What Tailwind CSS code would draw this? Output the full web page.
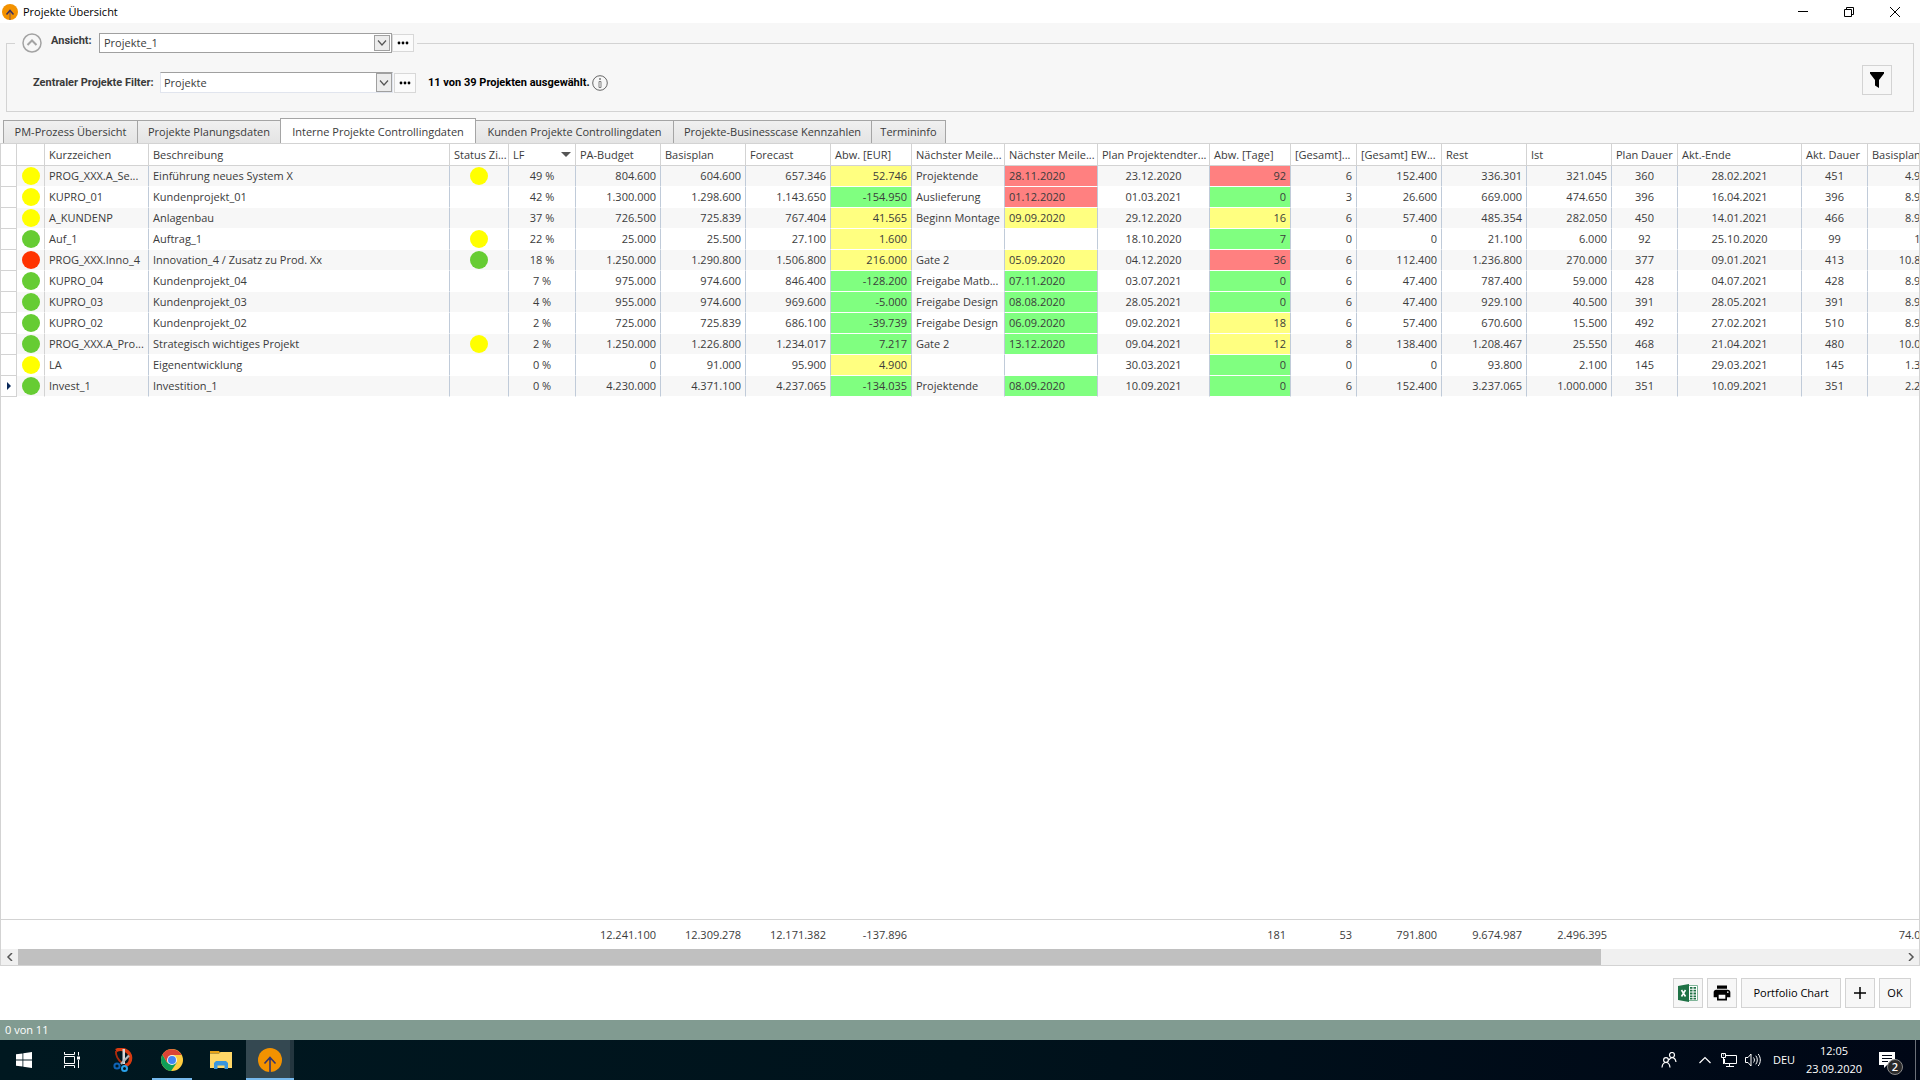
<!DOCTYPE html>
<html lang="de">

<head>
    <meta charset="UTF-8">
    <meta name="viewport" content="width=device-width, initial-scale=1.0">
    <title>Projekte Übersicht</title>
    <!-- Tailwind CSS -->
    <script src="https://cdn.jsdelivr.net/npm/@tailwindcss/browser@4"></script>
</head>

<body class="h-screen flex flex-col overflow-hidden bg-white font-['Open_Sans','Noto_Sans',sans-serif] text-[11px] leading-4 text-[#3b3b3b]">

    <!-- Title bar -->
    <header class="h-[23px] shrink-0 flex items-center bg-white text-black">
        <svg class="ml-0.5 w-4 h-4" viewBox="0 0 16 16" aria-hidden="true">
            <circle cx="8" cy="8" r="8" fill="#f39200" />
            <path d="M8 8v8" stroke="#b9762a" stroke-width="2" />
            <path d="M4.500 10.500 8 6.500l3.500 4" fill="none" stroke="#3b3260" stroke-width="1.500" />
        </svg>
        <h1 class="ml-[5px] text-[11px]">Projekte Übersicht</h1>
        <div class="ml-auto flex h-full">
            <button class="w-[46px] h-full flex items-center justify-center" aria-label="Minimieren">
                <svg class="w-2.5 h-2.5" viewBox="0 0 10 10"><path d="M0 4.500h10" stroke="#000" /></svg>
            </button>
            <button class="w-[46px] h-full flex items-center justify-center" aria-label="Wiederherstellen">
                <svg class="w-2.5 h-2.5" viewBox="0 0 10 10" fill="none" stroke="#000"><path d="M.5 2.500h7v7h-7zM2.500 2.500v-2h7v7h-2" /></svg>
            </button>
            <button class="w-[46px] h-full flex items-center justify-center" aria-label="Schließen">
                <svg class="w-2.5 h-2.5" viewBox="0 0 10 10"><path d="M0 0l10 10M10 0 0 10" stroke="#000" /></svg>
            </button>
            <span class="w-0.5"></span>
        </div>
    </header>

    <!-- View and filter selection -->
    <section class="shrink-0 bg-[#f7f7f7] pt-2.5">
        <fieldset class="ml-1.5 mr-1.5 h-[79px] border border-[#d3d3d3] px-2">
            <legend class="flex items-center h-5 pl-[7px] pr-[3px]">
                <button class="w-5 h-5" aria-label="Einklappen">
                    <svg class="w-5 h-5" viewBox="0 0 20 20" fill="none" stroke="#a3a3a3">
                        <circle cx="10" cy="10" r="9" stroke-width="1.500" />
                        <path d="M5.500 12 10 7.500l4.500 4.500" stroke-width="2" />
                    </svg>
                </button>
                <label for="ansicht" class="ml-[9px] w-12 pb-1 font-['Roboto','Open_Sans',sans-serif] font-bold whitespace-nowrap">Ansicht:</label>
                <span class="relative flex w-[293px] h-5">
                    <select id="ansicht" class="appearance-none w-full h-full border border-[#a0a0a0] bg-white pl-1">
                        <option>Projekte_1</option>
                    </select>
                    <span class="pointer-events-none absolute right-0.5 inset-y-0.5 w-4 flex items-center justify-center border border-[#a0a0a0] bg-[#ececec]">
                        <svg class="w-2.5 h-2.5" viewBox="0 0 10 10"><path d="M1 2.500 5 7l4-4.500" fill="none" stroke="#555" stroke-width="1.200" /></svg>
                    </span>
                </span>
                <button class="w-[22px] h-[18px] flex items-center justify-center border border-[#d8d8d8] bg-[#fbfbfb]" aria-label="Ansicht bearbeiten">
                    <svg class="w-3 h-1" viewBox="0 0 12 4" fill="#000"><circle cx="2" cy="2" r="1.400" /><circle cx="6" cy="2" r="1.400" /><circle cx="10" cy="2" r="1.400" /></svg>
                </button>
            </legend>
            <div class="flex items-center h-[59px] pl-[18px] pr-[13px]">
                <label for="filter" class="w-[127px] font-['Roboto','Open_Sans',sans-serif] font-bold whitespace-nowrap">Zentraler Projekte Filter:</label>
                <span class="relative flex w-[233px] h-[21px]">
                    <select id="filter" class="appearance-none w-full h-full border border-[#e1e5ee] border-t-[#a0a0a0] bg-white pl-[3px]">
                        <option>Projekte</option>
                    </select>
                    <span class="pointer-events-none absolute right-px inset-y-px w-4 flex items-center justify-center border border-[#a0a0a0] bg-[#ececec]">
                        <svg class="w-2.5 h-2.5" viewBox="0 0 10 10"><path d="M1 2.500 5 7l4-4.500" fill="none" stroke="#555" stroke-width="1.200" /></svg>
                    </span>
                </span>
                <button class="w-[22px] h-5 ml-px flex items-center justify-center border border-[#d8d8d8] bg-[#fbfbfb]" aria-label="Filter bearbeiten">
                    <svg class="w-3 h-1" viewBox="0 0 12 4" fill="#000"><circle cx="2" cy="2" r="1.400" /><circle cx="6" cy="2" r="1.400" /><circle cx="10" cy="2" r="1.400" /></svg>
                </button>
                <p class="ml-3 w-[164px] font-['Roboto','Open_Sans',sans-serif] font-bold text-black whitespace-nowrap">11 von 39 Projekten ausgewählt.</p>
                <svg class="w-4 h-4" viewBox="0 0 16 16" fill="none" stroke="#666">
                    <circle cx="8" cy="8" r="7.300" />
                    <path d="M7 6.500h2v6H7zM7.500 3.500h1v1h-1z" stroke-width=".8" />
                </svg>
                <button class="ml-auto mt-3 self-start w-[30px] h-[30px] flex items-center justify-center border border-[#d3d3d3] bg-[#f7f7f7]" aria-label="Filtern">
                    <svg class="w-3.5 h-4" viewBox="0 0 14 16"><path d="M0 0h14v1.500L9 8v8l-4-2.500V8L0 1.500z" fill="#000" /></svg>
                </button>
            </div>
        </fieldset>

        <!-- Tabs -->
        <div role="tablist" class="flex items-end h-[31px] pl-[3px]">
            <button role="tab" class="w-[135px] h-[23px] border border-b-0 border-[#a5a5a5] bg-linear-to-b from-[#f0f0f0] to-[#e4e4e4] whitespace-nowrap">PM-Prozess Übersicht</button>
            <button role="tab" class="w-[142px] h-[23px] border-t border-[#a5a5a5] bg-linear-to-b from-[#f0f0f0] to-[#e4e4e4] whitespace-nowrap">Projekte Planungsdaten</button>
            <button role="tab" aria-selected="true" class="w-[196px] h-[25px] pt-0.5 border border-b-0 border-[#a5a5a5] bg-white whitespace-nowrap">Interne Projekte Controllingdaten</button>
            <button role="tab" class="w-[198px] h-[23px] border-t border-r border-[#a5a5a5] bg-linear-to-b from-[#f0f0f0] to-[#e4e4e4] whitespace-nowrap">Kunden Projekte Controllingdaten</button>
            <button role="tab" class="w-[198px] h-[23px] border-t border-r border-[#a5a5a5] bg-linear-to-b from-[#f0f0f0] to-[#e4e4e4] whitespace-nowrap">Projekte-Businesscase Kennzahlen</button>
            <button role="tab" class="w-[74px] h-[23px] border-t border-r border-[#a5a5a5] bg-linear-to-b from-[#f0f0f0] to-[#e4e4e4] whitespace-nowrap">Termininfo</button>
        </div>
    </section>

    <!-- Project grid -->
    <main class="flex-1 min-h-0 flex flex-col border border-[#d3d3d3]">
        <div class="flex-1 min-h-0 overflow-hidden">
            <table class="table-fixed w-[1937px] h-full border-separate border-spacing-0 whitespace-nowrap">
                <colgroup>
                    <col class="w-[16px]"><col class="w-[28px]"><col class="w-[104px]"><col class="w-[301px]">
                    <col class="w-[59px]"><col class="w-[67px]"><col class="w-[85px]"><col class="w-[85px]">
                    <col class="w-[85px]"><col class="w-[81px]"><col class="w-[93px]"><col class="w-[93px]">
                    <col class="w-[112px]"><col class="w-[81px]"><col class="w-[66px]"><col class="w-[85px]">
                    <col class="w-[85px]"><col class="w-[85px]"><col class="w-[66px]"><col class="w-[124px]">
                    <col class="w-[66px]"><col class="w-[70px]">
                </colgroup>
                <thead>
                    <tr id="head"></tr>
                </thead>
                <tbody id="rows"></tbody>
                <tfoot>
                    <tr id="sums"></tr>
                </tfoot>
            </table>
        </div>
        <!-- Horizontal scroll bar -->
        <div class="h-4 shrink-0 flex bg-[#f0f0f0]">
            <button class="w-[17px] flex items-center justify-center" aria-label="Nach links">
                <svg class="w-2 h-2" viewBox="0 0 8 8"><path d="M6 0 2 4l4 4" fill="none" stroke="#555" stroke-width="1.500" /></svg>
            </button>
            <div class="flex-1">
                <div class="h-full w-[84%] bg-[#c0c0c0]"></div>
            </div>
            <button class="w-[17px] flex items-center justify-center" aria-label="Nach rechts">
                <svg class="w-2 h-2" viewBox="0 0 8 8"><path d="M2 0l4 4-4 4" fill="none" stroke="#555" stroke-width="1.500" /></svg>
            </button>
        </div>
    </main>

    <!-- Actions -->
    <div class="h-[54px] shrink-0 flex items-start justify-end gap-1 pt-3 pr-[9px] text-black">
        <button class="w-[30px] h-[30px] flex items-center justify-center border border-[#d3d3d3] bg-[#f7f7f7]" aria-label="Excel-Export">
            <svg class="w-5 h-[18px]" viewBox="0 0 20 18">
                <path d="M10 1.500h9.500v15H10" fill="#fff" stroke="#7fb598" />
                <path d="M12 3h2.500v1.800H12zm3.500 0H18v1.800h-2.500zM12 5.800h2.500v1.800H12zm3.500 0H18v1.800h-2.500zM12 8.600h2.500v1.800H12zm3.500 0H18v1.800h-2.500zM12 11.400h2.500v1.800H12zm3.500 0H18v1.800h-2.500zM12 14h2.500v1.500H12zm3.500 0H18v1.500h-2.500z" fill="#1f7246" />
                <path d="M0 2 11 0v18L0 16z" fill="#1f7246" />
                <path d="M3.500 6l4 6.500M7.500 6l-4 6.500" stroke="#fff" stroke-width="1.600" />
            </svg>
        </button>
        <button class="w-[30px] h-[30px] flex items-center justify-center border border-[#d3d3d3] bg-[#f7f7f7]" aria-label="Drucken">
            <svg class="w-5 h-5" viewBox="0 0 24 24"><path d="M19 8H5c-1.660 0-3 1.340-3 3v6h4v4h12v-4h4v-6c0-1.660-1.340-3-3-3zm-3 11H8v-5h8v5zm3-7c-.55 0-1-.45-1-1s.45-1 1-1 1 .45 1 1-.45 1-1 1zm-1-9H6v4h12V3z" fill="#000" /></svg>
        </button>
        <button class="w-[100px] h-[30px] border border-[#d3d3d3] bg-[#f7f7f7]">Portfolio Chart</button>
        <button class="w-[30px] h-[30px] flex items-center justify-center border border-[#d3d3d3] bg-[#f7f7f7]" aria-label="Neu">
            <svg class="w-3 h-3" viewBox="0 0 12 12"><path d="M6 0v12M0 6h12" stroke="#000" stroke-width="1.500" /></svg>
        </button>
        <button class="w-8 h-[30px] border border-[#d3d3d3] bg-[#f7f7f7]">OK</button>
    </div>

    <div class="h-5 shrink-0 flex items-center pl-[5px] bg-[#819b91] text-white">0 von 11</div>

    <!-- Taskbar -->
    <footer class="h-10 shrink-0 flex bg-linear-to-r from-[#001820] via-[#00131c] to-[#000716] text-white">
        <button class="w-12 flex items-center justify-center" aria-label="Start">
            <svg class="w-4 h-4" viewBox="0 0 16 16" fill="#fff"><path d="M0 2.300 6.500 1.400v6.200H0zM7.300 1.300 16 0v7.600H7.300zM0 8.400h6.500v6.200L0 13.700zM7.300 8.400H16V16l-8.700-1.300z" /></svg>
        </button>
        <button class="w-12 mr-[3px] flex items-center justify-center" aria-label="Taskansicht">
            <svg class="w-4 h-4" viewBox="0 0 16 16" fill="none" stroke="#fff"><path d="M.5 4.500h10v7H.5zM.5 0v2.500h10V0M.5 16v-2.500h10V16M14.500 0v3.500M14.500 8v8" /><path d="M13 4.500h3v3h-3z" fill="#fff" stroke="none" /></svg>
        </button>
        <div class="flex gap-px">
            <button class="w-12 flex items-center justify-center" aria-label="Snipping Tool">
                <svg class="w-5 h-6" viewBox="0 0 20 24" fill="none">
                    <path d="M3 2.500C9-.5 17 3 17.500 9.500c.3 4-2 7.500-5.500 8" stroke="#d83b11" stroke-width="3.500" />
                    <path d="M3 3c-.5 4 2 9 6 12" stroke="#a82a0c" stroke-width="2" />
                    <path d="M9.500 1h2.500v15h-2.500z" fill="#d8d8d8" />
                    <path d="M16 7.500 8 16" stroke="#b5b9bd" stroke-width="2.200" />
                    <circle cx="4" cy="18" r="2.600" stroke="#0f63b5" stroke-width="2" />
                    <circle cx="11.500" cy="20.500" r="2.500" stroke="#2aa2ea" stroke-width="2" />
                </svg>
            </button>
            <button class="w-12 relative flex items-center justify-center" aria-label="Chrome">
                <svg class="w-[22px] h-[22px]" viewBox="0 0 48 48">
                    <circle cx="24" cy="24" r="24" fill="#ffcd40" />
                    <path d="M24 24 13.600 30 3.200 12A24 24 0 0 0 22 47.900L34.400 30z" fill="#0f9d58" />
                    <path d="M24 13h20.800A24 24 0 0 0 3.200 12l10.400 18z" fill="#db4437" />
                    <circle cx="24" cy="24" r="11" fill="#f1f1f1" />
                    <circle cx="24" cy="24" r="8.700" fill="#4285f4" />
                </svg>
                <span class="absolute bottom-0 inset-x-1 h-0.5 bg-[#76b9ed]"></span>
            </button>
            <button class="w-12 flex items-center justify-center" aria-label="Explorer">
                <svg class="w-[22px] h-[18px]" viewBox="0 0 22 18">
                    <path d="M0 0h9l1.500 2.500H0z" fill="#e8a317" />
                    <path d="M0 2.500h9L10.500 1H22v16H0z" fill="#ffd767" />
                    <path d="M4 18v-6l2-2h10l2 2v6h-3.500v-3.500h-7V18z" fill="#3a96dd" />
                </svg>
            </button>
            <button class="w-12 relative flex items-center justify-center bg-[#344851] border-r-4 border-[#24363f]" aria-label="Projekte Übersicht">
                <svg class="ml-1 w-6 h-6" viewBox="0 0 24 24"><circle cx="12" cy="12" r="12" fill="#f39200" /><path d="M12 24V10M6.500 15.500 12 9.500l5.500 6" fill="none" stroke="#35356b" stroke-width="1.600" /></svg>
                <span class="absolute bottom-0 left-0 -right-1 h-0.5 bg-[#76b9ed]"></span>
            </button>
        </div>
        <!-- System tray -->
        <div class="ml-auto flex items-center">
            <button class="w-12 flex justify-center" aria-label="Kontakte">
                <svg class="w-4 h-4" viewBox="0 0 16 16" fill="none" stroke="#fff" stroke-width="1.200"><circle cx="5" cy="8" r="2.400" /><path d="M1 15.500c.3-3 1.800-5 4-5s3.700 2 4 5" /><circle cx="11" cy="3" r="2.500" /><path d="M8 8c.8-1.600 1.700-2.400 3-2.400 2 0 3.600 1.700 4 4.400" /></svg>
            </button>
            <button class="w-6 flex justify-center" aria-label="Ausgeblendete Symbole">
                <svg class="w-3 h-2" viewBox="0 0 12 8"><path d="M.5 7 6 1.500 11.500 7" fill="none" stroke="#fff" stroke-width="1.200" /></svg>
            </button>
            <button class="w-6 flex justify-center" aria-label="Netzwerk">
                <svg class="w-4 h-4" viewBox="0 0 16 16" fill="none" stroke="#fff"><path d="M5 3.500h10.500v8H3.500V7M.5 1.500h4v4h-4zM2.500 6v6M8.500 11.500v3M5 14.500h8" /><path d="M2 3h1" /></svg>
            </button>
            <button class="w-6 flex justify-center" aria-label="Lautstärke">
                <svg class="w-4 h-4" viewBox="0 0 16 16" fill="none" stroke="#fff"><path d="M.5 5.500H3l3-3.500v12l-3-3.500H.5zM8.500 5.500c1.200 1.500 1.200 3.500 0 5M10.800 3.700c2 2.500 2 6 0 8.600M13.200 2c2.800 3.500 2.800 8.500 0 12" /></svg>
            </button>
            <button class="w-[38px] text-center">DEU</button>
            <div class="w-[62px] h-9 text-center leading-[18px]"><time datetime="2020-09-23T12:05">12:05<br>23.09.2020</time></div>
            <button class="relative w-[50px] h-10 flex items-center pl-3.5" aria-label="Info-Center">
                <svg class="w-4 h-4" viewBox="0 0 16 16"><path d="M0 0h16v13H8l-3 3v-3H0z" fill="#fff" /><path d="M3 3.500h10M3 6.500h10M3 9.500h6" stroke="#000716" /></svg>
                <span class="absolute left-[22px] top-[19px] w-4 h-4 rounded-full border border-[#8a8a8a] bg-[#2b2b2b] text-[11px] leading-[14px] font-semibold text-center">2</span>
            </button>
            <span class="w-[5px] h-10 border-l border-[#6b7079]"></span>
        </div>
    </footer>

    <script>
        const headers = ["", "", "Kurzzeichen", "Beschreibung", "Status Zi...", "LF", "PA-Budget", "Basisplan", "Forecast",
            "Abw. [EUR]", "Nächster Meile...", "Nächster Meile...", "Plan Projektendter...", "Abw. [Tage]",
            "[Gesamt]...", "[Gesamt] EW...", "Rest", "Ist", "Plan Dauer", "Akt.-Ende", "Akt. Dauer", "Basisplan"];

        // one letter per column: l = left, r = right, c = center
        const align = "ccllccrrrrllcrrrrrcccr";

        const aligns = { l: "text-left px-1", r: "text-right px-1", c: "text-center px-0" };
        const dots = { y: "bg-[#ffff00]", g: "bg-[#66cc33]", r: "bg-[#ff3300]" };
        const fills = { y: "bg-[#ffff80]", g: "bg-[#80ff80]", r: "bg-[#ff8080]" };

        // status, short name, description, target status, values ..., colors of [EUR, milestone, days]
        const projects = [
            ["y", "PROG_XXX.A_Se...", "Einführung neues System X", "y", "49 %", "804.600", "604.600", "657.346", "52.746", "Projektende", "28.11.2020", "23.12.2020", "92", "6", "152.400", "336.301", "321.045", "360", "28.02.2021", "451", "4.900", "yrr"],
            ["y", "KUPRO_01", "Kundenprojekt_01", "", "42 %", "1.300.000", "1.298.600", "1.143.650", "-154.950", "Auslieferung", "01.12.2020", "01.03.2021", "0", "3", "26.600", "669.000", "474.650", "396", "16.04.2021", "396", "8.900", "grg"],
            ["y", "A_KUNDENP", "Anlagenbau", "", "37 %", "726.500", "725.839", "767.404", "41.565", "Beginn Montage", "09.09.2020", "29.12.2020", "16", "6", "57.400", "485.354", "282.050", "450", "14.01.2021", "466", "8.900", "yyy"],
            ["g", "Auf_1", "Auftrag_1", "y", "22 %", "25.000", "25.500", "27.100", "1.600", "", "", "18.10.2020", "7", "0", "0", "21.100", "6.000", "92", "25.10.2020", "99", "100", "y-g"],
            ["r", "PROG_XXX.Inno_4", "Innovation_4 / Zusatz zu Prod. Xx", "g", "18 %", "1.250.000", "1.290.800", "1.506.800", "216.000", "Gate 2", "05.09.2020", "04.12.2020", "36", "6", "112.400", "1.236.800", "270.000", "377", "09.01.2021", "413", "10.800", "yyr"],
            ["g", "KUPRO_04", "Kundenprojekt_04", "", "7 %", "975.000", "974.600", "846.400", "-128.200", "Freigabe Matb...", "07.11.2020", "03.07.2021", "0", "6", "47.400", "787.400", "59.000", "428", "04.07.2021", "428", "8.900", "ggg"],
            ["g", "KUPRO_03", "Kundenprojekt_03", "", "4 %", "955.000", "974.600", "969.600", "-5.000", "Freigabe Design", "08.08.2020", "28.05.2021", "0", "6", "47.400", "929.100", "40.500", "391", "28.05.2021", "391", "8.900", "ggg"],
            ["g", "KUPRO_02", "Kundenprojekt_02", "", "2 %", "725.000", "725.839", "686.100", "-39.739", "Freigabe Design", "06.09.2020", "09.02.2021", "18", "6", "57.400", "670.600", "15.500", "492", "27.02.2021", "510", "8.900", "ggy"],
            ["g", "PROG_XXX.A_Pro...", "Strategisch wichtiges Projekt", "y", "2 %", "1.250.000", "1.226.800", "1.234.017", "7.217", "Gate 2", "13.12.2020", "09.04.2021", "12", "8", "138.400", "1.208.467", "25.550", "468", "21.04.2021", "480", "10.000", "ggy"],
            ["y", "LA", "Eigenentwicklung", "", "0 %", "0", "91.000", "95.900", "4.900", "", "", "30.03.2021", "0", "0", "0", "93.800", "2.100", "145", "29.03.2021", "145", "1.300", "y-g"],
            ["g", "Invest_1", "Investition_1", "", "0 %", "4.230.000", "4.371.100", "4.237.065", "-134.035", "Projektende", "08.09.2020", "10.09.2021", "0", "6", "152.400", "3.237.065", "1.000.000", "351", "10.09.2021", "351", "2.200", "ggg"],
        ];

        const sums = { 6: "12.241.100", 7: "12.309.278", 8: "12.171.382", 9: "-137.896", 13: "181", 14: "53", 15: "791.800", 16: "9.674.987", 17: "2.496.395", 21: "74.000" };

        document.getElementById("head").innerHTML = headers.map((title, i) => {
            const content = i === 5
                ? `<button class="flex w-full items-center justify-between pr-1">LF<svg class="w-2.5 h-[5px]" viewBox="0 0 10 5"><path d="M0 0h10L5 5z" fill="#555" /></svg></button>`
                : title;
            return `<th class="h-[22px] py-0 pl-1 pr-0 text-left font-normal border-r border-b border-[#d3d3d3]">${content}</th>`;
        }).join("");

        const dot = (color) => color ? `<span class="block mx-auto w-[18px] h-[18px] rounded-full ${dots[color]}"></span>` : "";

        document.getElementById("rows").innerHTML = projects.map((p, row) => {
            const stripe = row % 2 ? "bg-white" : "bg-[#f7f7f7]";
            const marker = row === projects.length - 1
                ? `<svg class="ml-1.5 w-1 h-2" viewBox="0 0 4 8"><path d="M0 0l4 4-4 4z" fill="#0b2a5b" /></svg>`
                : "";
            const cells = p.slice(0, 21).map((value, i) => {
                const col = i + 1;
                const fill = { 9: fills[p[21][0]], 11: fills[p[21][1]], 13: fills[p[21][2]] }[col] || stripe;
                const content = col === 1 || col === 4 ? dot(value) : value;
                const line = col === 1 ? "border-r-[#d3d3d3]" : "border-r-[#c0cbd9]";
                return `<td class="h-[21px] py-0 border-r border-b border-b-white ${line} ${aligns[align[col]]} ${fill}">${content}</td>`;
            }).join("");
            return `<tr><td class="h-[21px] p-0 border-r border-b border-[#d3d3d3]">${marker}</td>${cells}</tr>`;
        }).join("") + `<tr><td colspan="22"></td></tr>`;

        document.getElementById("sums").innerHTML = headers.map((_, i) =>
            `<td class="h-[30px] py-0 pl-0 pr-[5px] text-right border-t border-[#d3d3d3]">${sums[i] || ""}</td>`
        ).join("");
    </script>
</body>

</html>
